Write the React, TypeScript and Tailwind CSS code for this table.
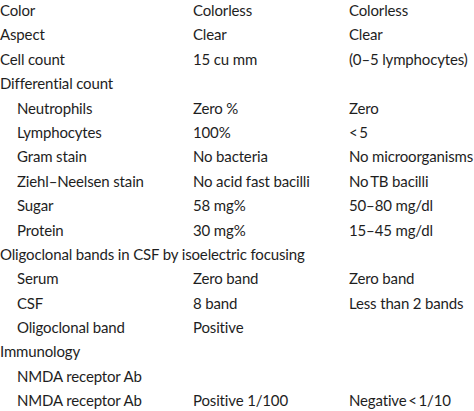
const rows: { a: string; b?: string; c?: string; indent?: boolean }[] = [
  { a: 'Color', b: 'Colorless', c: 'Colorless' },
  { a: 'Aspect', b: 'Clear', c: 'Clear' },
  { a: 'Cell count', b: '15 cu mm', c: '(0–5 lymphocytes)' },
  { a: 'Differential count' },
  { a: 'Neutrophils', b: 'Zero %', c: 'Zero', indent: true },
  { a: 'Lymphocytes', b: '100%', c: '<\u20095', indent: true },
  { a: 'Gram stain', b: 'No bacteria', c: 'No microorganisms', indent: true },
  { a: 'Ziehl–Neelsen stain', b: 'No acid fast bacilli', c: 'No\u2009TB bacilli', indent: true },
  { a: 'Sugar', b: '58 mg%', c: '50–80 mg/dl', indent: true },
  { a: 'Protein', b: '30 mg%', c: '15–45 mg/dl', indent: true },
  { a: 'Oligoclonal bands in CSF by isoelectric focusing' },
  { a: 'Serum', b: 'Zero band', c: 'Zero band', indent: true },
  { a: 'CSF', b: '8 band', c: 'Less than 2 bands', indent: true },
  { a: 'Oligoclonal band', b: 'Positive', indent: true },
  { a: 'Immunology' },
  { a: 'NMDA receptor Ab', indent: true },
  { a: 'NMDA receptor Ab', b: 'Positive 1/100', c: 'Negative\u2009<\u20091/10', indent: true },
];

export default function App() {
  return (
    <div className="w-[474px] h-[411px] overflow-hidden bg-white text-[#1e1e1e] text-[15px] tracking-[-0.15px] font-['Lato',sans-serif]">
      <div className="-mt-[2px]">
        {rows.map((r, i) => (
          <div key={i} className="relative h-[24.4px] leading-[24.4px] whitespace-nowrap">
            <span className={r.indent ? 'absolute left-[17px]' : 'absolute left-0'}>{r.a}</span>
            {r.b && <span className="absolute left-[193px]">{r.b}</span>}
            {r.c && <span className="absolute left-[349px]">{r.c}</span>}
          </div>
        ))}
      </div>
    </div>
  );
}
